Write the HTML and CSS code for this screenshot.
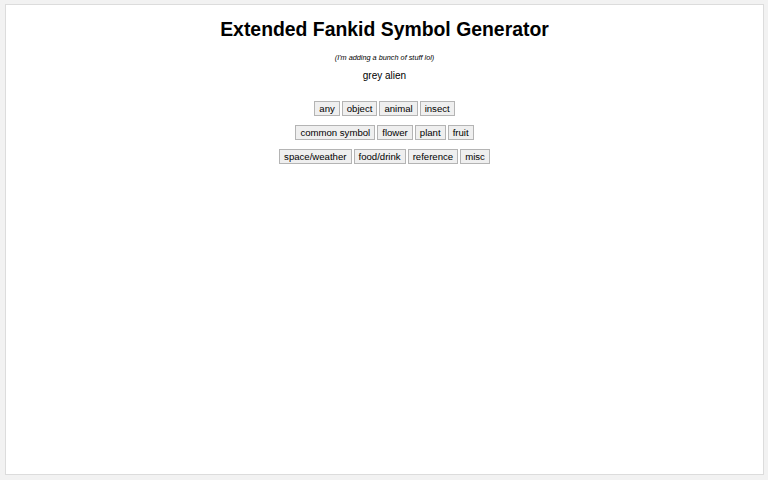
FILE: index.html
```html
<!DOCTYPE html>
<html>
<head>
<meta charset="utf-8">
<link rel="stylesheet" href="styles.css">
</head>
<body>
<div class="page">
  <h1 class="title">Extended Fankid Symbol Generator</h1>
  <p class="note">(I'm adding a bunch of stuff lol)</p>
  <p class="result">grey alien</p>
  <div class="row">
    <button class="btn">any</button>
    <button class="btn">object</button>
    <button class="btn">animal</button>
    <button class="btn">insect</button>
  </div>
  <div class="row">
    <button class="btn">common symbol</button>
    <button class="btn">flower</button>
    <button class="btn">plant</button>
    <button class="btn">fruit</button>
  </div>
  <div class="row">
    <button class="btn">space/weather</button>
    <button class="btn">food/drink</button>
    <button class="btn">reference</button>
    <button class="btn">misc</button>
  </div>
</div>
</body>
</html>
```
FILE: styles.css
```css
html, body {
  margin: 0;
  padding: 0;
  background: #f2f2f2;
  font-family: "Liberation Sans", Arial, sans-serif;
}
body {
  padding: 4px 4px 4px 5px;
  height: 480px;
  box-sizing: border-box;
}
.page {
  background: #fff;
  border: 1px solid #dcdcdc;
  height: 471px;
  box-sizing: border-box;
  text-align: center;
  padding-top: 12px;
  width: 759px;
}
.title {
  font-size: 19.4px;
  font-weight: bold;
  margin: 0;
  line-height: 24px;
  color: #000;
}
.note {
  font-size: 7.3px;
  font-style: italic;
  margin: 12px 0 0;
  line-height: 10px;
}
.result {
  font-size: 10px;
  margin: 7px 0 0;
  line-height: 12px;
}
.row {
  display: flex;
  justify-content: center;
  gap: 2px;
  margin-top: 9px;
}
.row:first-of-type {
  margin-top: 19px;
}
.btn {
  font-family: "Liberation Sans", Arial, sans-serif;
  font-size: 9.6px;
  line-height: 11px;
  height: 15px;
  padding: 1px 4px;
  background: #efefef;
  border: 1px solid #b4b4b4;
  border-radius: 0;
  color: #000;
  margin: 0;
}
```
